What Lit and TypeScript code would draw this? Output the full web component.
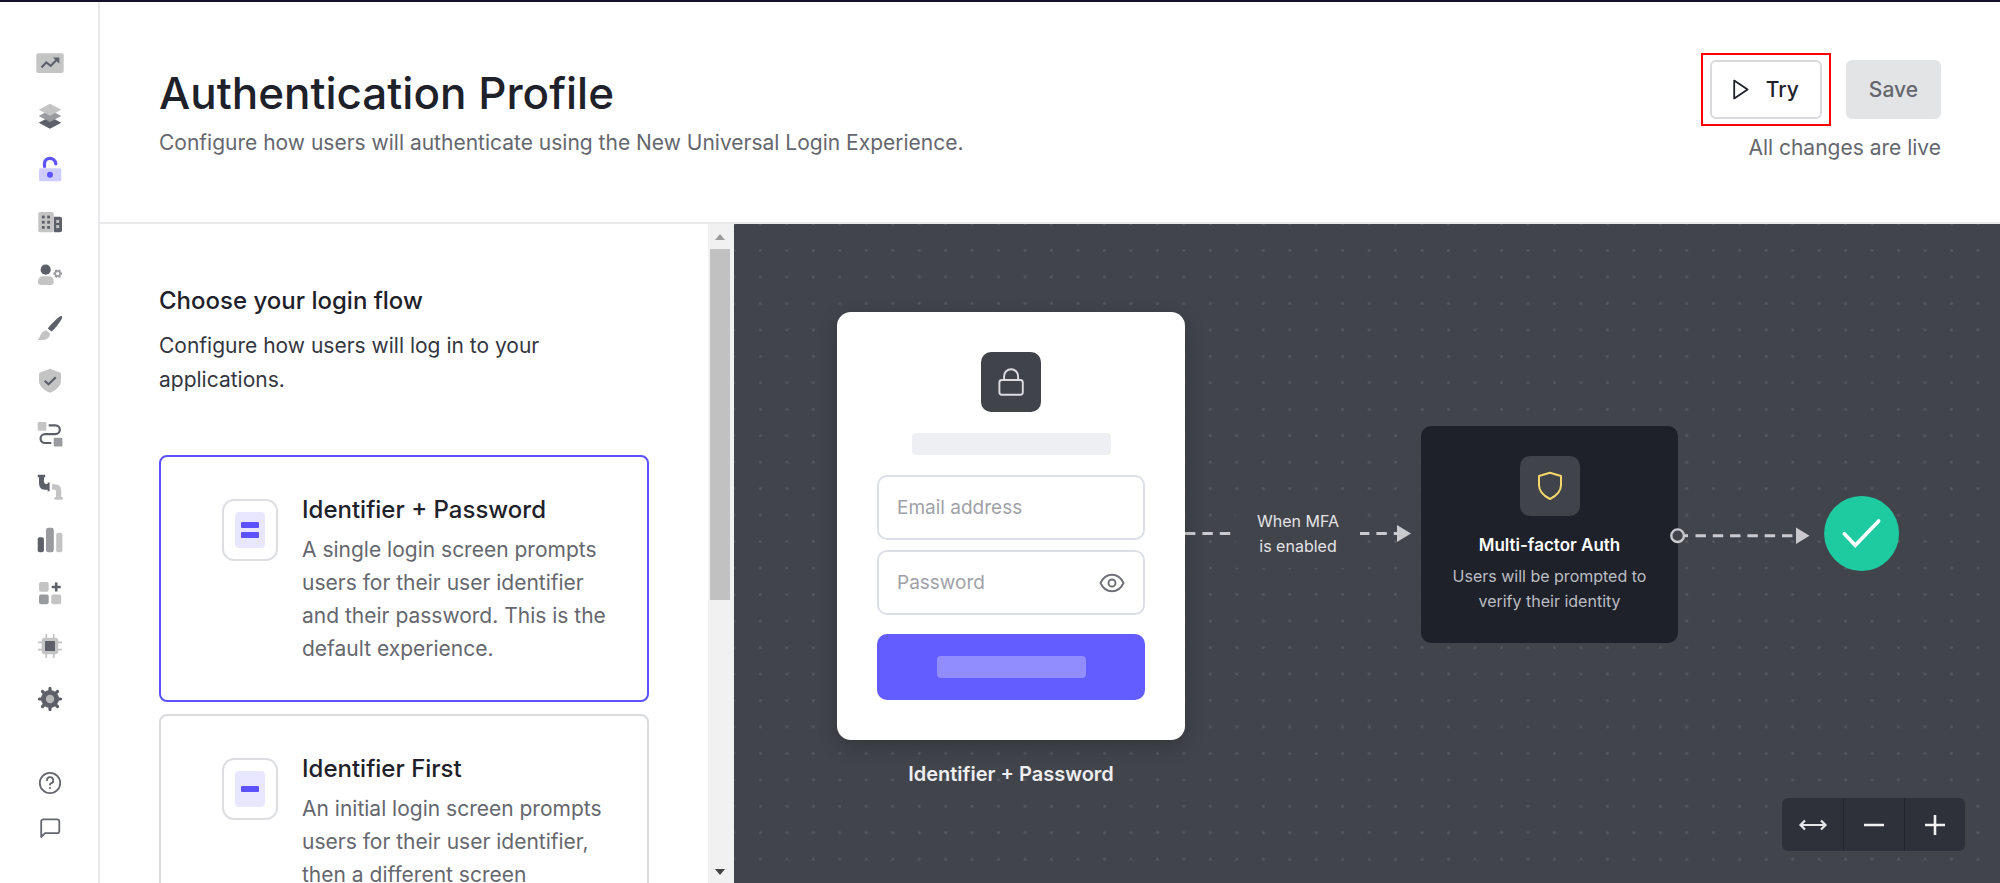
import { LitElement, html, css, svg } from "lit";
import { customElement, state } from "lit/decorators.js";
import { classMap } from "lit/directives/class-map.js";

const DARK = "#5d6069";
const MID = "#9a9b9f";
const LIGHT = "#c4c4c4";

const gearTeeth = (cx: number, cy: number, r1: number, r2: number, w: number, color: string) =>
  [0, 45, 90, 135].map(
    (a) => svg`<path d="M${cx} ${cy - r2}V${cy - r1}M${cx} ${cy + r1}V${cy + r2}" stroke=${color}
      stroke-width=${w} stroke-linecap="round" transform="rotate(${a} ${cx} ${cy})"/>`
  );

const navIcons = [
  {
    label: "Activity",
    art: svg`<rect x="1.3" y="5.3" width="27.4" height="19.7" rx="2" fill=${LIGHT}/>
      <path d="M6.5 19.5L11.3 14.4L15.7 17.8L22 11.5" fill="none" stroke=${DARK} stroke-width="2"/>
      <path d="M18 9.5H24.3V15.8Z" fill=${DARK}/>`,
  },
  {
    label: "Applications",
    art: svg`<path d="M15 15.7L26.3 21.7L15 27.7L3.7 21.7Z" fill=${DARK}/>
      <path d="M15 9L26.3 15L15 21L3.7 15Z" fill=${MID}/>
      <path d="M15 2.7L26.3 8.7L15 14.7L3.7 8.7Z" fill=${LIGHT}/>`,
  },
  {
    label: "Authentication",
    art: svg`<rect x="4" y="14.3" width="22.3" height="13" rx="1.5" fill="#cfccff"/>
      <circle cx="15" cy="20.7" r="3" fill="#5c53ff"/>
      <path d="M9.5 13.8V9.6C9.5 2.6 20 2.6 20.8 9.8" fill="none" stroke="#5c53ff" stroke-width="3.2"/>
      <circle cx="20.8" cy="9.8" r="1.6" fill="#5c53ff"/>`,
  },
  {
    label: "Organizations",
    art: svg`<rect x="3.3" y="5" width="15.6" height="20.3" rx="2" fill=${LIGHT}/>
      <path d="M19 9.7H25a2 2 0 0 1 2 2V23.3a2 2 0 0 1-2 2H19Z" fill=${DARK}/>
      ${[10, 15.2, 20.4].map((y) => [8.3, 13.6].map((x) => svg`<rect x=${x - 1.4} y=${y - 1.4} width="2.8" height="2.8" fill=${DARK}/>`))}
      ${[14.4, 19.6].map((y) => svg`<rect x="21.2" y=${y - 1.5} width="3" height="3" fill=${LIGHT}/>`)}`,
  },
  {
    label: "User Management",
    art: svg`<circle cx="10.7" cy="9.7" r="5.1" fill=${DARK}/>
      <path d="M3 22V21a4.7 4.7 0 0 1 4.7-4.7h6.3A4.7 4.7 0 0 1 18.7 21v1a3 3 0 0 1-3 3H6a3 3 0 0 1-3-3Z" fill=${LIGHT}/>
      <circle cx="22.7" cy="13.6" r="2.5" fill="none" stroke=${MID} stroke-width="1.6"/>
      ${[0, 60, 120].map((a) => svg`<path d="M18.300 13.600H20M25.400 13.600H27.100" stroke=${MID} stroke-width="2.400" transform="rotate(${a} 22.700 13.600)"/>`)}`,
  },
  {
    label: "Branding",
    art: svg`<path d="M27 3.2C28.6 4.9 20.6 15.2 16.6 18.6L12.8 15.4C16 11 25.4 1.6 27 3.2Z" fill=${DARK}/>
      <path d="M11.4 17.2L15 20.4C14.8 24.8 11.6 28 2.6 26.8C5.6 25.2 4.4 18.4 11.4 17.2Z" fill=${LIGHT}/>`,
  },
  {
    label: "Security",
    art: svg`<path d="M15 2.8L25 6.4a1.6 1.6 0 0 1 1 1.5V15C26 20 21 24.400 15 26.800C9 24.400 4 20 4 15V7.900a1.600 1.600 0 0 1 1-1.500Z" fill=${LIGHT}/>
      <path d="M9.700 14.700L13.500 18.300L20.800 11.200" fill="none" stroke=${DARK} stroke-width="2.200"/>`,
  },
  {
    label: "Actions",
    art: svg`<rect x="2.700" y="3" width="8.700" height="8.700" rx="1" fill=${LIGHT}/>
      <rect x="18.700" y="18.700" width="8.700" height="8.700" rx="1" fill=${MID}/>
      <path d="M13.700 6.300H20.400a4.400 4.400 0 0 1 0 8.800H10a4.400 4.400 0 0 0 0 8.900H16.300" fill="none" stroke=${DARK} stroke-width="2.200"/>`,
  },
  {
    label: "Auth Pipeline",
    art: svg`<path d="M2.700 2.800H10.200V5.200H9V9.800Q9 12 11.400 12H12.600V10.600H14.600V19.300H12.600V17.800H10.500Q4 17.800 4 11.500V5.200H2.700Z" fill=${DARK}/>
      <path d="M17 12.200H19.500Q26.200 12.200 26.200 18.500V25H27.700V27.700H19.500V25H21V19.500Q21 17.400 18.800 17.400H17Z" fill=${LIGHT}/>`,
  },
  {
    label: "Monitoring",
    art: svg`<rect x="2.700" y="12.300" width="6.200" height="15" rx="2" fill=${DARK}/>
      <rect x="11" y="2.700" width="7.800" height="24.600" rx="2.400" fill=${MID}/>
      <rect x="21.200" y="7.700" width="6.200" height="19.600" rx="2" fill=${LIGHT}/>`,
  },
  {
    label: "Marketplace",
    art: svg`<rect x="4" y="4" width="9.700" height="9.700" rx="2" fill=${LIGHT}/>
      <rect x="4" y="16.500" width="9.700" height="9.700" rx="2" fill=${MID}/>
      <rect x="16.300" y="16.500" width="9.900" height="9.700" rx="2" fill=${LIGHT}/>
      <path d="M21.200 4.500V13.500M16.700 9H25.700" stroke=${DARK} stroke-width="2.600"/>`,
  },
  {
    label: "Extensions",
    art: svg`<rect x="6.700" y="6.700" width="16.600" height="16.600" rx="3" fill=${LIGHT}/>
      <path d="M11.300 3V27M18.700 3V27M3 11.300H27M3 18.700H27" stroke=${LIGHT} stroke-width="1.700"/>
      <rect x="10" y="10" width="10" height="10" rx=".5" fill=${DARK}/>`,
  },
  {
    label: "Settings",
    art: svg`<circle cx="15" cy="15" r="9" fill=${DARK}/>
      ${gearTeeth(15, 15, 8.6, 10.6, 3.2, DARK)}
      <circle cx="15" cy="15" r="4.200" fill="#b8b8ba"/>`,
  },
];

const footIcons = [
  {
    label: "Help",
    art: svg`<circle cx="15" cy="15" r="10.200" fill="none" stroke="#65676e" stroke-width="1.800"/>
      <path d="M12 12.300A3.100 3.100 0 1 1 15.800 15.300Q15 15.600 15 16.700" fill="none" stroke="#65676e" stroke-width="1.800" stroke-linecap="round"/>
      <circle cx="15" cy="20" r="1.100" fill="#65676e"/>`,
  },
  {
    label: "Feedback",
    art: svg`<path d="M6.200 24V8.500a2.200 2.200 0 0 1 2.200-2.200H22.100a2.200 2.200 0 0 1 2.200 2.200V18a2.200 2.200 0 0 1-2.200 2.200H10Z" fill="none" stroke="#65676e" stroke-width="1.800" stroke-linejoin="round"/>`,
  },
];

const flows = [
  {
    id: "password",
    bars: 2,
    title: "Identifier + Password",
    text: "A single login screen prompts users for their user identifier and their password. This is the default experience.",
  },
  {
    id: "first",
    bars: 1,
    title: "Identifier First",
    text: "An initial login screen prompts users for their user identifier, then a different screen",
  },
];

@customElement("side-nav")
export class SideNav extends LitElement {
  static styles = css`
    :host {
      display: block;
      border-right: 2px solid #e9e9eb;
      width: 100px;
      flex: none;
    }
    nav {
      display: flex;
      flex-direction: column;
      align-items: center;
      padding: 34px 0 0 2px;
    }
    .link {
      display: flex;
      align-items: center;
      justify-content: center;
      width: 53px;
      height: 53px;
    }
    .foot {
      display: flex;
      flex-direction: column;
      padding-top: 35px;
    }
    .short {
      height: 45px;
    }
    svg {
      width: 30px;
      height: 30px;
    }
  `;
  render() {
    const link = (i: { label: string; art: unknown }, cls: string) => html`<a
      class="link ${cls}"
      href="#"
      aria-label=${i.label}
      ><svg viewBox="0 0 30 30" aria-hidden="true">${i.art}</svg></a
    >`;
    return html`<nav aria-label="Main">
      ${navIcons.map((i) => link(i, ""))}
      <div class="foot">${footIcons.map((i) => link(i, "short"))}</div>
    </nav>`;
  }
}

@customElement("flow-panel")
export class FlowPanel extends LitElement {
  @state() private chosen = "password";

  static styles = css`
    * {
      box-sizing: border-box;
    }
    :host {
      display: flex;
      flex: none;
      width: 634px;
      min-height: 0;
      overflow: hidden;
    }
    .scroll {
      flex: 1;
      overflow: hidden;
      padding: 60px 59px 0;
    }
    h2,
    h3,
    p {
      margin: 0;
    }
    h2 {
      font-size: 24px;
      line-height: 34px;
      font-weight: 500;
      color: #1e212a;
    }
    .intro {
      margin-top: 11px;
      font-size: 21px;
      line-height: 34px;
      color: #333640;
    }
    .cards {
      display: flex;
      flex-direction: column;
      gap: 12px;
      margin: 58px 0 0;
      padding: 0;
      border: 0;
    }
    .card {
      display: flex;
      gap: 24px;
      padding: 36px 36px 35px 61px;
      border: 2px solid #dadbdf;
      border-radius: 8px;
      cursor: pointer;
    }
    .card.on {
      border-color: #5c53ff;
    }
    .radio {
      position: absolute;
      opacity: 0;
      width: 1px;
      height: 1px;
      margin: 0;
    }
    .thumb {
      flex: none;
      display: flex;
      align-items: center;
      justify-content: center;
      width: 56px;
      height: 62px;
      margin-top: 6px;
      border: 2px solid #dddee1;
      border-radius: 12px;
    }
    .sheet {
      display: flex;
      flex-direction: column;
      align-items: center;
      justify-content: center;
      gap: 4px;
      width: 30px;
      height: 36px;
      border-radius: 4px;
      background: #e9e7ff;
    }
    .bar {
      width: 18px;
      height: 6px;
      border-radius: 1px;
      background: #5c53ff;
    }
    h3 {
      font-size: 24px;
      line-height: 34px;
      font-weight: 500;
      color: #1e212a;
    }
    .desc {
      margin-top: 6px;
      font-size: 21px;
      line-height: 33px;
      color: #65676e;
    }
    .track {
      flex: none;
      display: flex;
      flex-direction: column;
      align-items: center;
      width: 26px;
      padding-right: 2px;
      background: #f1f1f1;
    }
    .track svg {
      flex: none;
      width: 12px;
      height: 25px;
    }
    .handle {
      flex: 351;
      width: 20px;
      background: #c1c1c1;
    }
    .rest {
      flex: 258;
    }
  `;

  render() {
    return html`
      <div class="scroll">
        <h2 id="h">Choose your login flow</h2>
        <p class="intro">Configure how users will log in to your applications.</p>
        <fieldset class="cards" aria-labelledby="h">
          ${flows.map(
            (f) => html`<label class=${classMap({ card: true, on: this.chosen === f.id })}>
              <input
                class="radio"
                type="radio"
                name="flow"
                .checked=${this.chosen === f.id}
                @change=${() => (this.chosen = f.id)}
              />
              <span class="thumb"
                ><span class="sheet"
                  >${Array.from({ length: f.bars }, () => html`<span class="bar"></span>`)}</span
                ></span
              >
              <div>
                <h3>${f.title}</h3>
                <p class="desc">${f.text}</p>
              </div>
            </label>`
          )}
        </fieldset>
      </div>
      <div class="track" aria-hidden="true">
        <svg viewBox="0 0 12 25"><path d="M6 10L11 16H1Z" fill="#9c9c9c" /></svg>
        <div class="handle"></div>
        <div class="rest"></div>
        <svg viewBox="0 0 12 25"><path d="M6 17L11 11H1Z" fill="#454545" /></svg>
      </div>
    `;
  }
}

@customElement("flow-canvas")
export class FlowCanvas extends LitElement {
  static styles = css`
    * {
      box-sizing: border-box;
    }
    :host {
      display: block;
      position: relative;
      flex: 1;
      overflow: hidden;
      background: #42444c;
    }
    .dots,
    .edges {
      position: absolute;
      inset: 0;
      width: 100%;
      height: 100%;
    }
    .node {
      position: absolute;
    }
    .login {
      left: 103px;
      top: 88px;
      width: 348px;
      margin: 0;
      padding: 40px;
      display: flex;
      flex-direction: column;
      align-items: center;
      border-radius: 14px;
      background: #fff;
      box-shadow: 0 6px 20px rgba(0, 0, 0, 0.2);
    }
    .tile {
      flex: none;
      display: flex;
      align-items: center;
      justify-content: center;
      width: 60px;
      height: 60px;
      border-radius: 10px;
      background: #41434b;
    }
    .tile svg {
      width: 30px;
      height: 30px;
    }
    .ghost {
      width: 199px;
      height: 22px;
      margin: 21px 0 20px;
      border-radius: 4px;
      background: #eeeff2;
    }
    .field {
      display: flex;
      align-items: center;
      width: 100%;
      height: 65px;
      padding: 0 18px;
      border: 2px solid #dcdfe5;
      border-radius: 10px;
    }
    .field + .field {
      margin-top: 10px;
    }
    .input {
      flex: 1;
      min-width: 0;
      border: 0;
      padding: 0;
      outline: 0;
      background: none;
      font: inherit;
      font-size: 19px;
      color: #1e212a;
    }
    .input::placeholder {
      color: #a0a1a7;
      opacity: 1;
    }
    .eye {
      display: flex;
      padding: 0;
      border: 0;
      background: none;
    }
    .eye svg {
      width: 26px;
      height: 22px;
    }
    .go {
      display: flex;
      align-items: center;
      justify-content: center;
      width: 100%;
      height: 66px;
      margin-top: 19px;
      border: 0;
      border-radius: 10px;
      background: #635dff;
    }
    .go span {
      width: 149px;
      height: 22px;
      border-radius: 4px;
      background: #928dff;
    }
    .caption {
      left: 103px;
      top: 537px;
      width: 348px;
      margin: 0;
      text-align: center;
      font-size: 20px;
      line-height: 26px;
      font-weight: 600;
      color: #eeeef0;
    }
    .when {
      left: 502px;
      top: 285px;
      width: 124px;
      height: 59px;
      margin: 0;
      text-align: center;
      font-size: 16px;
      line-height: 25px;
      color: #e3e3e6;
      background: #42444c;
    }
    .mfa {
      left: 687px;
      top: 202px;
      width: 257px;
      height: 217px;
      padding: 30px 10px 0;
      display: flex;
      flex-direction: column;
      align-items: center;
      border-radius: 10px;
      background: #1e212a;
    }
    .mfa h3 {
      margin: 17px 0 6px;
      font-size: 17px;
      line-height: 25px;
      font-weight: 600;
      color: #fff;
    }
    .mfa p {
      margin: 0;
      width: 210px;
      text-align: center;
      font-size: 16px;
      line-height: 25px;
      color: #bcbdc2;
    }
    .tools {
      position: absolute;
      right: 35px;
      bottom: 32px;
      display: flex;
      border-radius: 6px;
      overflow: hidden;
      background: #2e3139;
    }
    .tool {
      display: flex;
      align-items: center;
      justify-content: center;
      width: 61px;
      height: 53px;
      padding: 0;
      border: 0;
      background: none;
    }
    .tool + .tool {
      border-left: 1px solid #23262e;
    }
    .tool svg {
      width: 30px;
      height: 24px;
    }
  `;

  render() {
    return html`
      <svg class="dots" aria-hidden="true">
        <defs>
          <pattern id="d" width="26.47" height="26.47" x="-13.3" y="-13.3" patternUnits="userSpaceOnUse">
            <circle cx="13.2" cy="13.2" r="1.5" fill="#56575c" />
          </pattern>
        </defs>
        <rect width="100%" height="100%" fill="url(#d)" />
      </svg>
      <svg class="edges" aria-hidden="true">
        <path d="M451 309.500H663" stroke="#cacace" stroke-width="3" stroke-dasharray="10.400 7" />
        <path d="M663 301L677 309.500L663 318Z" fill="#cacace" />
      </svg>
      <form class="node login" @submit=${(e: Event) => e.preventDefault()}>
        <div class="tile">
          <svg viewBox="0 0 30 30" fill="none" stroke="#dcdce0" stroke-width="1.900">
            <rect x="3.400" y="13" width="23.400" height="14.800" rx="2.500" />
            <path d="M8.100 13V9.200a7 7 0 0 1 14 0V13" />
          </svg>
        </div>
        <div class="ghost"></div>
        <div class="field">
          <input class="input" type="email" aria-label="Email address" placeholder="Email address" />
        </div>
        <div class="field">
          <input class="input" type="password" aria-label="Password" placeholder="Password" />
          <button class="eye" type="button" aria-label="Show password">
            <svg viewBox="0 0 26 22" fill="none" stroke="#6f7178" stroke-width="1.900">
              <path d="M1.500 11C4 5.500 8 2.700 13 2.700S22 5.500 24.500 11C22 16.500 18 19.300 13 19.300S4 16.500 1.500 11Z" stroke-linejoin="round" />
              <circle cx="13" cy="11" r="3.500" />
            </svg>
          </button>
        </div>
        <button class="go" type="submit" aria-label="Continue"><span></span></button>
      </form>
      <p class="node caption">Identifier + Password</p>
      <p class="node when">When MFA<br />is enabled</p>
      <div class="node mfa">
        <div class="tile">
          <svg viewBox="0 0 30 30" fill="none" stroke="#f5d76b" stroke-width="2">
            <path d="M15 1.800L26 5V14C26 20 21.500 24.800 15 28C8.500 24.800 4 20 4 14V5Z" stroke-linejoin="round" />
          </svg>
        </div>
        <h3>Multi-factor Auth</h3>
        <p>Users will be prompted to verify their identity</p>
      </div>
      <svg class="edges" aria-hidden="true">
        <path d="M951 311.700H954" stroke="#cacace" stroke-width="3" />
        <path d="M961.500 311.700H1060" stroke="#cacace" stroke-width="3" stroke-dasharray="10.400 6.900" />
        <path d="M1062 303.500L1075.500 311.700L1062 320Z" fill="#cacace" />
        <circle cx="943.600" cy="311.700" r="6.300" fill="#42444c" stroke="#cacace" stroke-width="2.400" />
        <circle cx="1127.600" cy="309.500" r="37.500" fill="#1ecba1" />
        <path d="M1110.300 309.700L1121.300 321.300L1144.700 297" fill="none" stroke="#fff" stroke-width="3.600" stroke-linecap="round" />
      </svg>
      <div class="tools">
        <button class="tool" type="button" aria-label="Fit to width">
          <svg viewBox="0 0 30 24" fill="none" stroke="#e6e6e8" stroke-width="2.200">
            <path d="M2.500 12H27.500M7 7.500L2.500 12L7 16.500M23 7.500L27.500 12L23 16.500" />
          </svg>
        </button>
        <button class="tool" type="button" aria-label="Zoom out">
          <svg viewBox="0 0 30 24"><path d="M5 12H25" stroke="#f2f2f3" stroke-width="2.600" /></svg>
        </button>
        <button class="tool" type="button" aria-label="Zoom in">
          <svg viewBox="0 0 30 24"><path d="M5 12H25M15 2V22" stroke="#f2f2f3" stroke-width="2.600" /></svg>
        </button>
      </div>
    `;
  }
}

@customElement("app-root")
export class AppRoot extends LitElement {
  static styles = css`
    * {
      box-sizing: border-box;
    }
    :host {
      display: flex;
      flex-direction: column;
      height: 100vh;
      overflow: hidden;
      background: #fff;
      font-family: Inter, "Liberation Sans", sans-serif;
      color: #1e212a;
    }
    .strip {
      flex: none;
      height: 2px;
      background: #14122b;
    }
    .shell {
      flex: 1;
      display: flex;
      min-height: 0;
    }
    .main {
      flex: 1;
      min-width: 0;
      display: flex;
      flex-direction: column;
    }
    header {
      flex: none;
      display: flex;
      justify-content: space-between;
      align-items: flex-start;
      padding: 51px 59px 58px;
      border-bottom: 2px solid #e9e9eb;
    }
    h1 {
      margin: 12px 0 0;
      font-size: 44px;
      line-height: 56px;
      font-weight: 500;
    }
    .sub {
      margin: 6px 0 0;
      font-size: 21px;
      line-height: 32px;
      color: #65676e;
    }
    .side {
      display: flex;
      flex-direction: column;
      align-items: flex-end;
    }
    .actions {
      display: flex;
      align-items: center;
      gap: 15px;
    }
    .mark {
      padding: 5px 7px;
      border: 2px solid #f00;
    }
    .btn {
      display: flex;
      align-items: center;
      justify-content: center;
      gap: 17px;
      height: 59px;
      padding: 0 21px;
      border: 2px solid #d9dadd;
      border-radius: 6px;
      background: #fff;
      font: inherit;
      font-size: 21px;
      font-weight: 500;
      color: #1e212a;
    }
    .btn svg {
      width: 16px;
      height: 21px;
    }
    .btn.save {
      border-color: #e3e4e6;
      background: #e3e4e6;
      color: #65676e;
    }
    .status {
      margin: 6px 0 0;
      font-size: 21px;
      line-height: 32px;
      color: #65676e;
    }
    .body {
      flex: 1;
      display: flex;
      min-height: 0;
    }
  `;

  render() {
    return html`
      <div class="strip"></div>
      <div class="shell">
        <side-nav></side-nav>
        <div class="main">
          <header>
            <div>
              <h1>Authentication Profile</h1>
              <p class="sub">
                Configure how users will authenticate using the New Universal Login Experience.
              </p>
            </div>
            <div class="side">
              <div class="actions">
                <div class="mark">
                  <button class="btn" type="button">
                    <svg viewBox="0 0 16 21" aria-hidden="true">
                      <path d="M1.200 1.600L14.600 10.500L1.200 19.400Z" fill="none" stroke="#1e212a" stroke-width="1.800" stroke-linejoin="round" />
                    </svg>
                    Try
                  </button>
                </div>
                <button class="btn save" type="button">Save</button>
              </div>
              <p class="status">All changes are live</p>
            </div>
          </header>
          <div class="body">
            <flow-panel></flow-panel>
            <flow-canvas></flow-canvas>
          </div>
        </div>
      </div>
    `;
  }
}
